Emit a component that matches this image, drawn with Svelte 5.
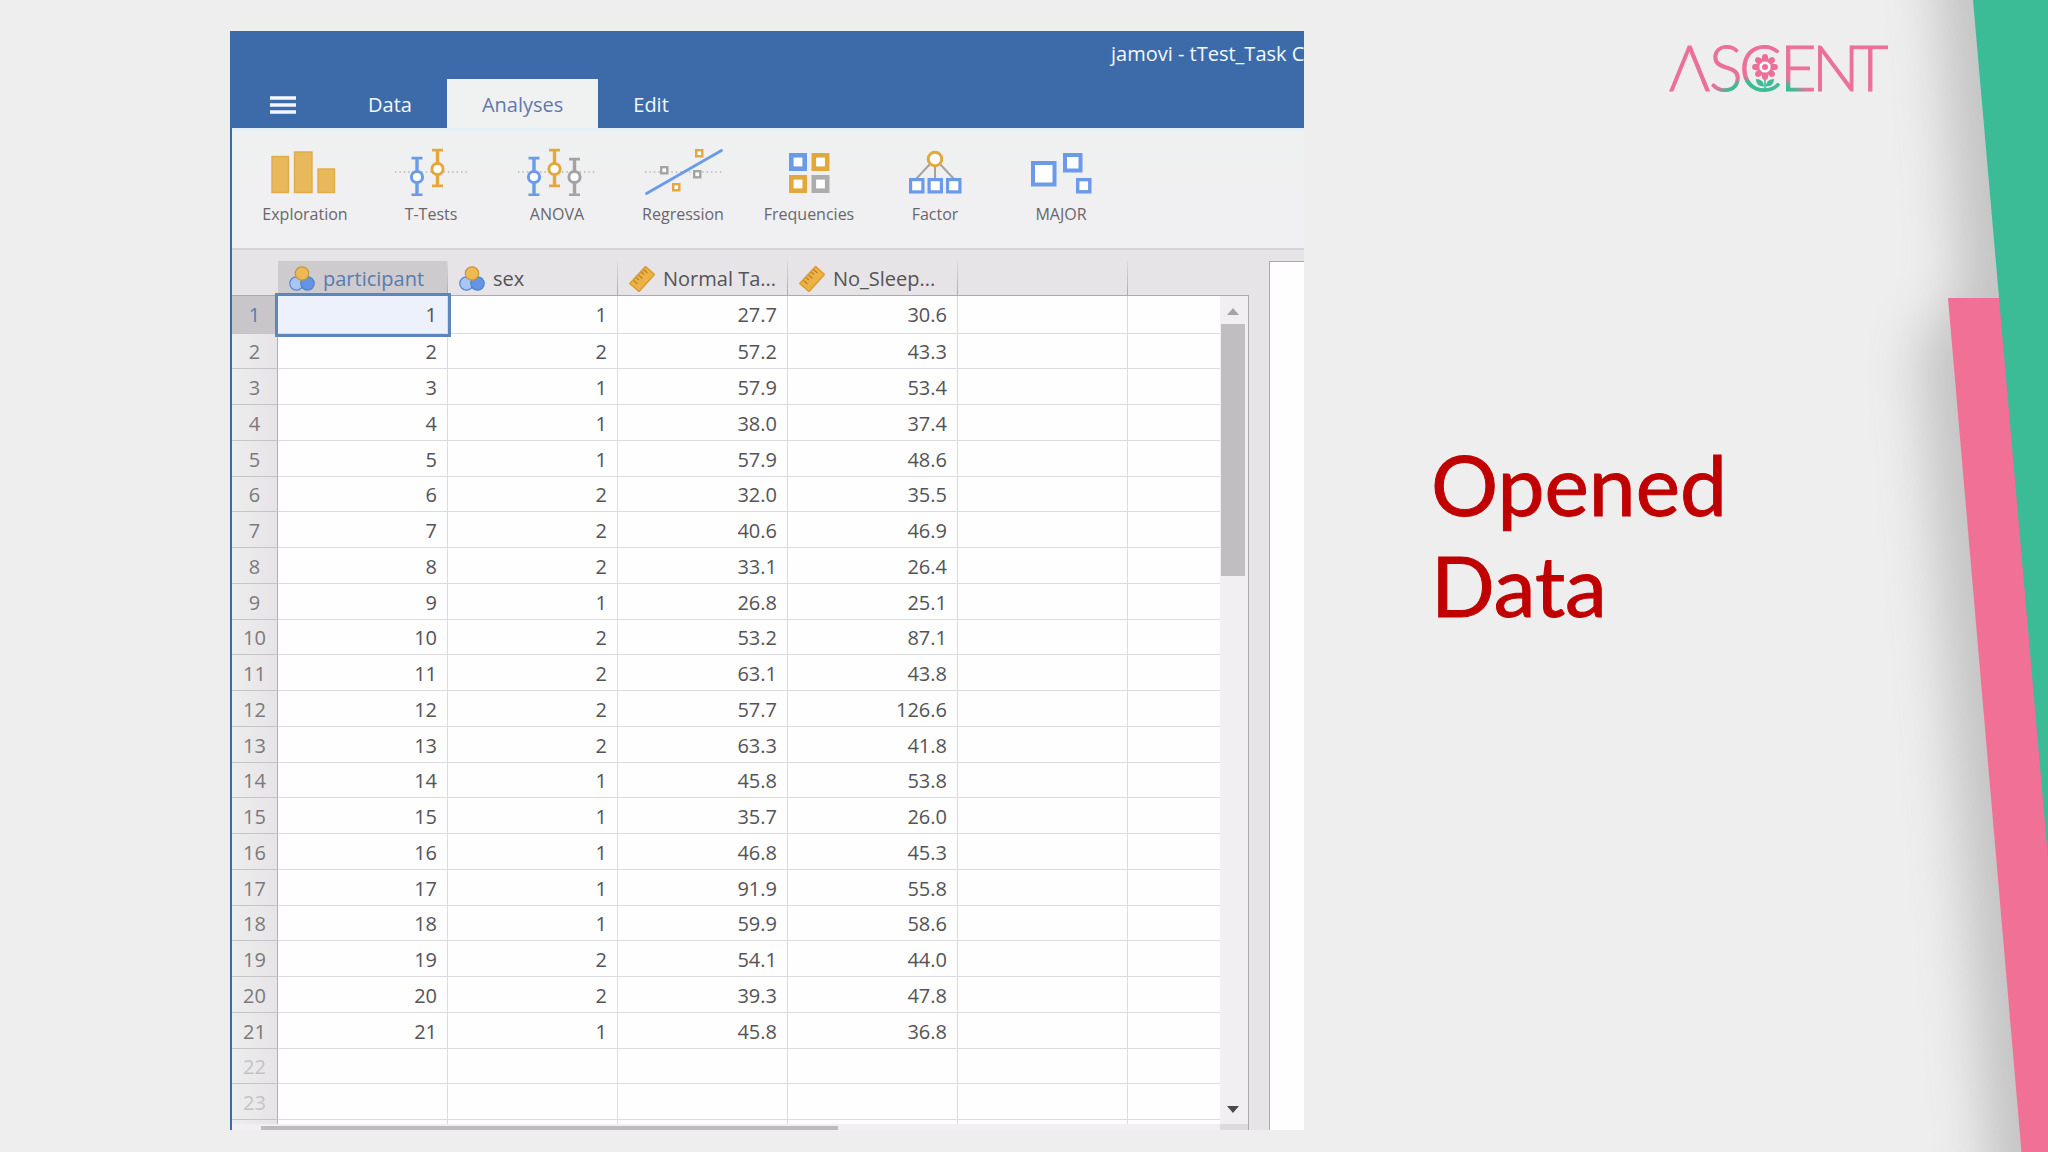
<script lang="ts">
    interface Column {
        name: string;
        kind: 'nominal' | 'continuous' | 'empty';
    }

    const tabs = ['Data', 'Analyses', 'Edit'];
    let activeTab = $state('Analyses');

    const modules = ['Exploration', 'T-Tests', 'ANOVA', 'Regression', 'Frequencies', 'Factor', 'MAJOR'];

    const columns: Column[] = [
        { name: 'participant', kind: 'nominal' },
        { name: 'sex', kind: 'nominal' },
        { name: 'Normal Ta...', kind: 'continuous' },
        { name: 'No_Sleep...', kind: 'continuous' },
        { name: '', kind: 'empty' },
        { name: '', kind: 'empty' }
    ];

    const data = [
        ['1', '27.7', '30.6'],
        ['2', '57.2', '43.3'],
        ['1', '57.9', '53.4'],
        ['1', '38.0', '37.4'],
        ['1', '57.9', '48.6'],
        ['2', '32.0', '35.5'],
        ['2', '40.6', '46.9'],
        ['2', '33.1', '26.4'],
        ['1', '26.8', '25.1'],
        ['2', '53.2', '87.1'],
        ['2', '63.1', '43.8'],
        ['2', '57.7', '126.6'],
        ['2', '63.3', '41.8'],
        ['1', '45.8', '53.8'],
        ['1', '35.7', '26.0'],
        ['1', '46.8', '45.3'],
        ['1', '91.9', '55.8'],
        ['1', '59.9', '58.6'],
        ['2', '54.1', '44.0'],
        ['2', '39.3', '47.8'],
        ['1', '45.8', '36.8']
    ];

    const rows = [
        ...data.map((values, i) => [String(i + 1), ...values, '', '']),
        ['', '', '', '', '', ''],
        ['', '', '', '', '', '']
    ];

    const petals = [0, 45, 90, 135, 180, 225, 270, 315];
</script>

{#snippet errorBar(x: number, top: number, bottom: number, mid: number, color: string)}
    <g stroke={color} fill="none">
        <path d="M{x} {top + 1}V{bottom - 1}" stroke-width="3.4" />
        <path d="M{x - 5.5} {top + 1.2}h11M{x - 5.5} {bottom - 1.2}h11" stroke-width="2.8" />
        <circle cx={x} cy={mid} r="5.6" fill="#fff" stroke-width="3" />
    </g>
{/snippet}

{#snippet box(x: number, y: number, size: number, color: string, line: number)}
    <rect
        x={x + line / 2}
        y={y + line / 2}
        width={size - line}
        height={size - line}
        fill="#fff"
        stroke={color}
        stroke-width={line}
    />
{/snippet}

{#snippet moduleIcon(name: string)}
    <svg class="module-icon" viewBox="0 0 80 48" aria-hidden="true">
        {#if name === 'Exploration'}
            <g fill="#e8b95b" stroke="#dfab49" stroke-width="1.4">
                <rect x="7" y="8.500" width="16.500" height="36" />
                <rect x="29.500" y="4" width="17.500" height="40.500" />
                <rect x="53" y="21" width="16.500" height="23.500" />
            </g>
        {:else if name === 'T-Tests'}
            <path class="dots" d="M4 24H78" />
            {@render errorBar(26, 9, 48, 29, '#6b9be8')}
            {@render errorBar(46.5, 1, 39, 21, '#e3a83c')}
        {:else if name === 'ANOVA'}
            <path class="dots" d="M1 24H78" />
            {@render errorBar(17, 9, 48, 29, '#6b9be8')}
            {@render errorBar(37.5, 1, 39, 21, '#e3a83c')}
            {@render errorBar(57.5, 10, 48, 29, '#a3a3a3')}
        {:else if name === 'Regression'}
            <path class="dots" d="M2 24H79" />
            <path d="M3.500 45.500L78.500 2.500" stroke="#6b9be8" stroke-width="2.800" stroke-linecap="round" />
            {@render box(52, 1, 8.5, '#e3a83c', 2.4)}
            {@render box(17, 18, 8.5, '#a3a3a3', 2.4)}
            {@render box(50, 22, 8.5, '#a3a3a3', 2.4)}
            {@render box(29, 35, 8.5, '#e3a83c', 2.4)}
        {:else if name === 'Frequencies'}
            {@render box(20, 5, 18, '#6b9be8', 4.6)}
            {@render box(42.5, 5, 18, '#e3a83c', 4.6)}
            {@render box(20, 27, 18, '#e3a83c', 4.6)}
            {@render box(42.5, 27, 18, '#adadad', 4.6)}
        {:else if name === 'Factor'}
            <path d="M36 15L21 31M40 17V31M44 15L59 31" stroke="#a3a3a3" stroke-width="2" />
            <circle cx="40" cy="11" r="6.800" fill="#fff" stroke="#e3a83c" stroke-width="3" />
            {@render box(14, 30, 15.5, '#6b9be8', 3.2)}
            {@render box(32.5, 30, 15.5, '#6b9be8', 3.2)}
            {@render box(51, 30, 15.5, '#6b9be8', 3.2)}
        {:else}
            {@render box(10, 13, 25.5, '#6b9be8', 4)}
            {@render box(42, 5, 19.5, '#6b9be8', 4)}
            {@render box(55, 30, 15.5, '#6b9be8', 3.4)}
        {/if}
    </svg>
{/snippet}

{#snippet columnIcon(kind: string)}
    <svg class="column-icon" viewBox="0 0 26 26" aria-hidden="true">
        {#if kind === 'nominal'}
            <circle cx="7.500" cy="17.500" r="6.700" fill="#a9c5f3" stroke="#5686d6" stroke-width="1.200" />
            <circle cx="18.500" cy="17.500" r="6.700" fill="#6494e4" stroke="#4f80d2" stroke-width="1.200" />
            <circle cx="13" cy="7.500" r="6.700" fill="#eeb955" stroke="#c9963a" stroke-width="1.200" />
        {:else}
            <path d="M0.800 17.500L16.500 0.500L25.500 8.500L10 25.500Z" fill="#ecb244" stroke="#dc9c30" stroke-width="1.500" stroke-linejoin="round" />
            <path d="M4.500 14.500l4 3.500M7 11.500l3 2.500M9.500 9l4 3.500M12 6l3 2.500M14.500 3.500l4 3.500" stroke="#b98428" stroke-width="1.200" fill="none" />
        {/if}
    </svg>
{/snippet}

<main class="slide">
    <svg class="ribbons" viewBox="0 0 248 1152" preserveAspectRatio="none" aria-hidden="true">
        <defs>
            <filter id="soft" x="-60%" y="-20%" width="220%" height="140%">
                <feGaussianBlur stdDeviation="26" />
            </filter>
        </defs>
        <path d="M130 -90L138 0L160 290L118 345L186 1152L193 1240H340V-90Z" fill="#858585" opacity="0.400" filter="url(#soft)" />
        <path d="M148 298H210L248 640V1152H221.500Z" fill="#f07096" />
        <path d="M173 0H248V858Z" fill="#3bbb96" />
    </svg>

    <section class="app" aria-label="jamovi">
        <header class="titlebar">
            <div class="title">jamovi - tTest_Task C</div>
            <nav class="tabs">
                <button class="menu" aria-label="Menu">
                    <svg viewBox="0 0 26 18" aria-hidden="true">
                        <path d="M0 2H26M0 9H26M0 16H26" stroke="#f3f8ff" stroke-width="3.600" />
                    </svg>
                </button>
                {#each tabs as tab}
                    <button class="tab" class:active={tab === activeTab} onclick={() => (activeTab = tab)}>{tab}</button>
                {/each}
            </nav>
        </header>

        <div class="toolbar">
            {#each modules as name}
                <button class="module">
                    {@render moduleIcon(name)}
                    <span>{name}</span>
                </button>
            {/each}
        </div>

        <div class="workspace">
            <div class="sheet">
                <div class="grid-area">
                    <table>
                        <colgroup>
                            <col class="num-col" />
                            {#each columns.slice(0, 5) as _}
                                <col class="data-col" />
                            {/each}
                            <col />
                        </colgroup>
                        <thead>
                            <tr>
                                <td class="corner"></td>
                                {#each columns as column, c}
                                    <th scope="col" class:selected={c === 0}>
                                        {#if column.kind !== 'empty'}
                                            <div class="column-name">
                                                {@render columnIcon(column.kind)}
                                                <span>{column.name}</span>
                                            </div>
                                        {/if}
                                    </th>
                                {/each}
                            </tr>
                        </thead>
                        <tbody>
                            {#each rows as row, r}
                                <tr>
                                    <th scope="row" class:selected={r === 0} class:unused={r >= data.length}>{r + 1}</th>
                                    {#each row as value, c}
                                        <td class:cursor={r === 0 && c === 0}>{value}</td>
                                    {/each}
                                </tr>
                            {/each}
                            <tr class="cut">
                                <th></th>
                                {#each columns as _}
                                    <td></td>
                                {/each}
                            </tr>
                        </tbody>
                    </table>
                    <div class="hscroll"><div class="hthumb"></div></div>
                </div>
                <div class="vscroll">
                    <div class="vtrack">
                        <svg class="arrow" viewBox="0 0 14 8" aria-hidden="true"><path d="M1 8L7 1L13 8Z" fill="#a5a3a6" /></svg>
                        <div class="vthumb"></div>
                        <svg class="arrow" viewBox="0 0 14 8" aria-hidden="true"><path d="M1 0L7 7L13 0Z" fill="#4c4a4d" /></svg>
                    </div>
                </div>
            </div>
            <div class="results"></div>
        </div>
    </section>

    <aside class="caption">
        <svg class="logo" viewBox="0 0 220 52" role="img" aria-label="ASCENT">
            <defs>
                <radialGradient id="leaf" gradientUnits="userSpaceOnUse" cx="0" cy="0" r="1" gradientTransform="translate(93 52) scale(48 18)">
                    <stop offset="0.700" stop-color="#3bbb96" />
                    <stop offset="1" stop-color="#ea709a" />
                </radialGradient>
            </defs>
            <text x="1 41 71 112 144 184" y="49" fill="url(#leaf)" stroke="url(#leaf)">ΛSCENT</text>
            <g transform="translate(97 25)">
                <circle r="12.500" cy="1" fill="#f1f0f1" />
                {#each petals as angle}
                    <ellipse cx="0" cy="-8.700" rx="3.200" ry="4.200" fill="#ea709a" transform="rotate({angle})" />
                {/each}
                <circle r="4.300" fill="#ea709a" stroke="#fff" stroke-width="2.600" />
                <path d="M0 13V22" stroke="#3bbb96" stroke-width="1.600" />
                <path d="M-1 19.500C-7 19.500 -9 16 -9 12C-4 12 -1 15 -1 19.500ZM1 19.500C7 19.500 9 16 9 12C4 12 1 15 1 19.500Z" fill="#3bbb96" />
            </g>
        </svg>
        <h1>Opened<br />Data</h1>
    </aside>
</main>

<style>
    :global(body) {
        background: #efeeef;
    }

    .slide {
        position: relative;
        box-sizing: border-box;
        min-height: 100vh;
        padding: 31px 0 21px 230px;
        display: grid;
        grid-template-columns: 1074fr 744fr;
        align-items: start;
        overflow: hidden;
        font-family: "Open Sans", "Noto Sans", sans-serif;
    }

    .ribbons {
        position: absolute;
        top: 0;
        right: 0;
        width: 248px;
        height: 100%;
    }

    button {
        border: 0;
        padding: 0;
        background: none;
        font: inherit;
        color: inherit;
    }

    .app {
        min-width: 0;
        border-left: 2px solid #3d6ba8;
        background: #e6e4e6;
        overflow: hidden;
    }

    .titlebar {
        display: flex;
        flex-direction: column;
        background: #3d6ba9;
        color: #f3f8ff;
        font-size: 20px;
    }

    .title {
        height: 48px;
        line-height: 46px;
        padding-left: 879px;
        white-space: nowrap;
        overflow: hidden;
    }

    .tabs {
        display: flex;
        height: 49px;
    }

    .menu {
        width: 101px;
        padding: 2px 0 0 38px;
        display: flex;
        align-items: center;
    }

    .menu svg {
        width: 26px;
        height: 18px;
    }

    .tab {
        padding: 2px 35px 0;
    }

    .tab.active {
        background: #f0f2f2;
        color: #6377ac;
    }

    .toolbar {
        display: flex;
        height: 120px;
        padding-left: 10px;
        background: linear-gradient(#e4effa, #eff1f1 6px, #f0eff1 70px);
        border-bottom: 2px solid #d5d3d6;
    }

    .module {
        width: 126px;
        padding-top: 20px;
        display: flex;
        flex-direction: column;
        align-items: center;
        font-size: 16px;
        line-height: 22px;
        color: #69676a;
    }

    .module-icon {
        width: 80px;
        height: 48px;
        margin-bottom: 7px;
    }

    .dots {
        stroke: #b4b4b4;
        stroke-width: 1.4;
        stroke-dasharray: 1.4 3;
    }

    .workspace {
        display: flex;
        gap: 20px;
        padding-top: 11px;
    }

    .sheet {
        flex: 1;
        min-width: 0;
        display: flex;
    }

    .grid-area {
        flex: 1;
        min-width: 0;
    }

    table {
        width: 100%;
        table-layout: fixed;
        border-collapse: separate;
        border-spacing: 0;
        font-size: 20px;
        line-height: 28px;
        color: #555356;
    }

    .num-col {
        width: 46px;
    }

    .data-col {
        width: 170px;
    }

    th,
    td {
        box-sizing: border-box;
        height: 36px;
        padding: 0;
        font-weight: 400;
    }

    thead th,
    .corner {
        height: 35px;
        border-bottom: 1px solid #aba9ac;
    }

    thead th {
        padding-top: 1px;
        border-right: 1px solid;
        border-image: linear-gradient(#dddbdd, #aba9ac) 1;
    }

    thead th:last-child {
        border-right: 0;
        border-image: none;
    }

    thead th.selected {
        background: #cdcbcd;
        color: #587bb0;
    }

    .column-name {
        display: flex;
        align-items: center;
        gap: 8px;
        padding-left: 11px;
        white-space: nowrap;
    }

    .column-icon {
        flex: none;
        width: 26px;
        height: 26px;
    }

    tbody th {
        padding-top: 2px;
        border-right: 1px solid #b3b1b4;
        border-bottom: 1px solid #c6c4c7;
        background: linear-gradient(90deg, #eeedee, #e6e4e6);
        text-align: center;
        color: #7b797c;
    }

    tbody th.selected {
        background: #c8c6c8;
        color: #587bb0;
    }

    tbody th.unused {
        color: #c4c2c5;
    }

    tbody td {
        padding: 2px 10px 0 0;
        border-right: 1px solid #dddbe0;
        border-bottom: 1px solid #dddbe0;
        background: #fefefe;
        text-align: right;
    }

    tbody td:last-child {
        border-right: 0;
    }

    tbody tr:first-child > * {
        height: 38px;
        padding-top: 0;
    }

    tbody tr:nth-child(4n + 2) > * {
        height: 35px;
    }

    tbody tr.cut > * {
        height: 4px;
        padding: 0;
        border-bottom: 0;
    }

    td.cursor {
        position: relative;
        background: #edf1fb;
        outline: 3px solid #5f86bb;
    }

    .hscroll {
        height: 6px;
        padding: 0 29px;
        background: #f1eff2;
        display: flex;
        align-items: flex-end;
    }

    .hthumb {
        width: 62%;
        height: 4px;
        background: #bdbbbe;
    }

    .vscroll {
        width: 28px;
        margin-top: 34px;
        border-top: 1px solid #aba9ac;
        border-right: 1px solid #aba9ac;
        background: #f1eff2;
        display: flex;
    }

    .vtrack {
        flex: 1;
        padding: 11px 3px 10px 1px;
        border-bottom: 6px solid #dcdadd;
        display: flex;
        flex-direction: column;
        align-items: center;
    }

    .vthumb {
        width: 100%;
        height: 252px;
        margin: 9px 0 auto;
        background: #c0bec1;
    }

    .arrow {
        width: 14px;
        height: 8px;
    }

    .results {
        width: 35px;
        box-sizing: border-box;
        border-top: 1px solid #aba9ac;
        border-left: 1px solid #aba9ac;
        background: #fefefe;
    }

    .caption {
        position: relative;
        display: flex;
        flex-direction: column;
        padding: 11px 160px 0 127px;
    }

    .logo {
        width: 220px;
        height: 52px;
        align-self: flex-end;
        overflow: visible;
    }

    .logo text {
        font-family: Lato, sans-serif;
        font-size: 63px;
        font-weight: 300;
        stroke-width: 1px;
    }

    h1 {
        margin: 339px 0 0;
        font-family: Lato, Roboto, sans-serif;
        font-size: 84px;
        font-weight: 400;
        line-height: 101px;
        color: #c00000;
        -webkit-text-stroke: 1px #c00000;
    }
</style>
